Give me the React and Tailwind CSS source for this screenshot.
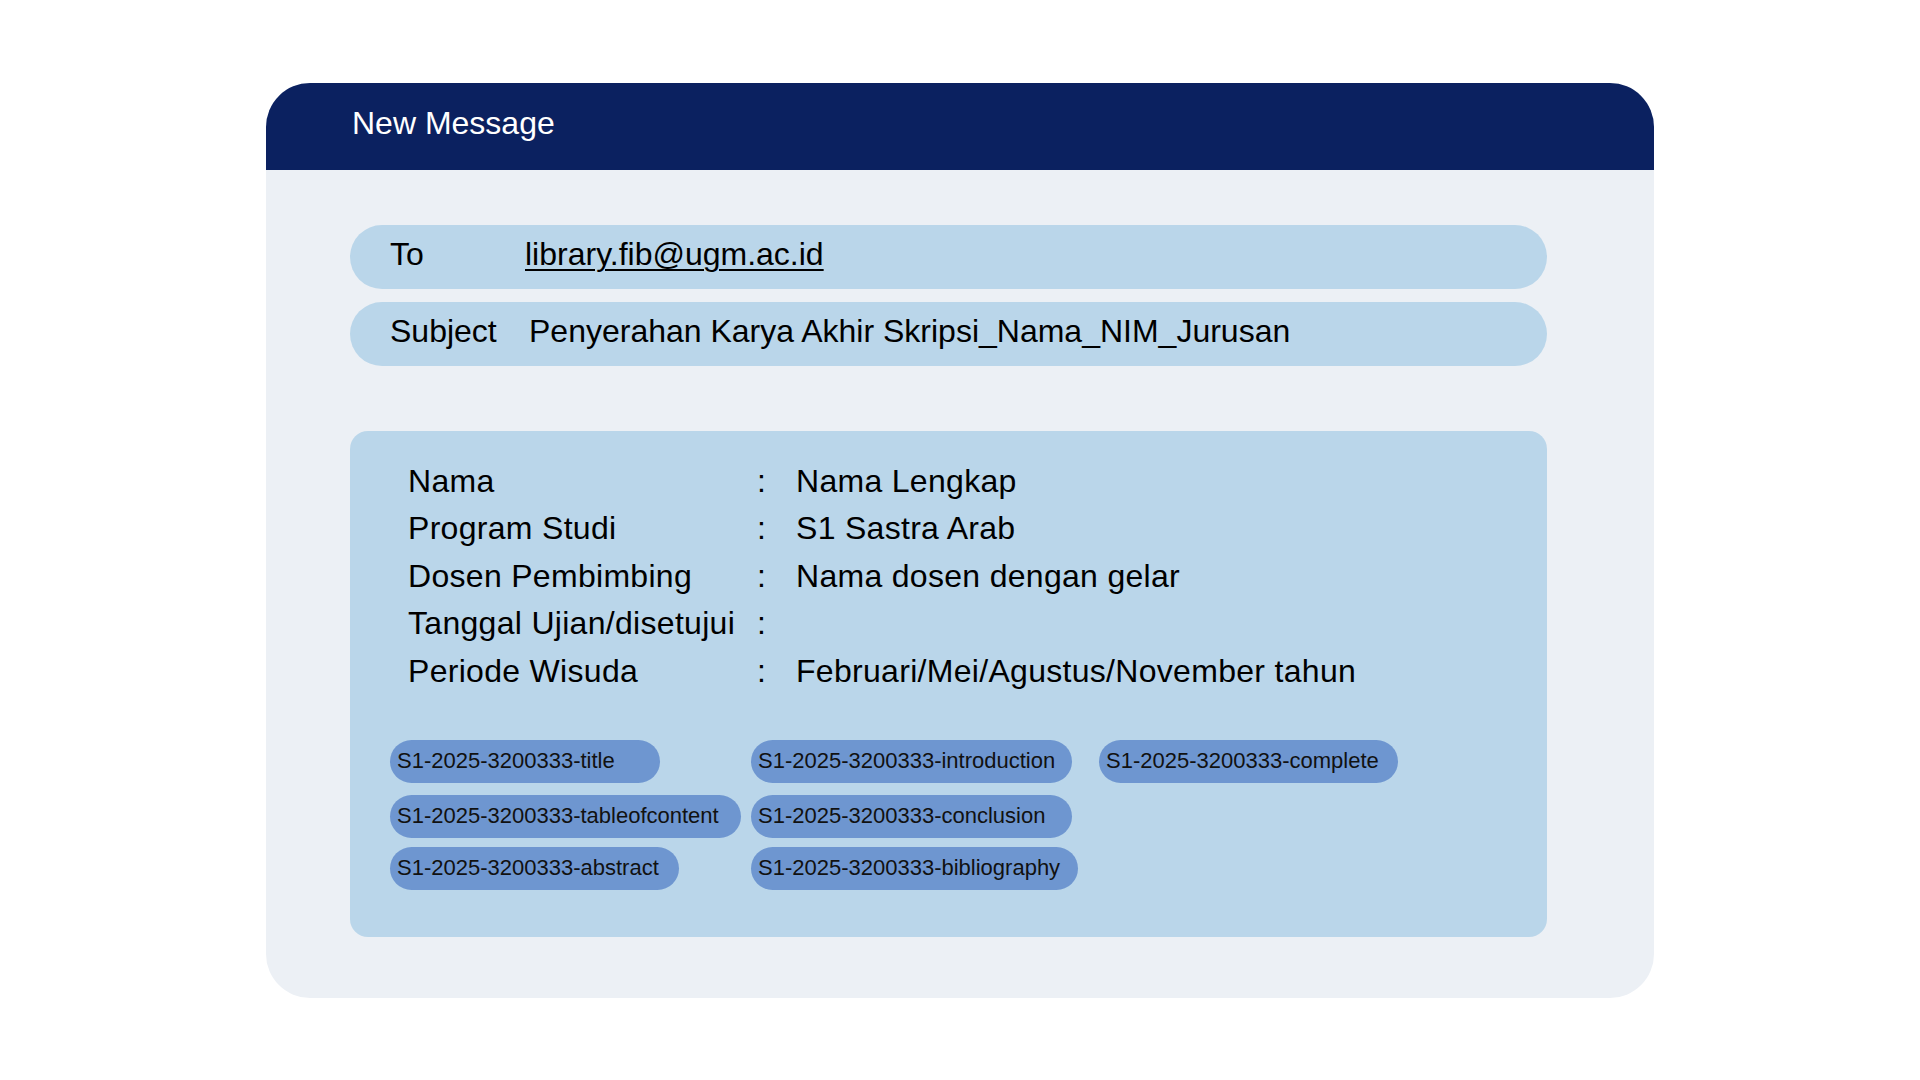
const fields = [
  ["Nama", "Nama Lengkap"],
  ["Program Studi", "S1 Sastra Arab"],
  ["Dosen Pembimbing", "Nama dosen dengan gelar"],
  ["Tanggal Ujian/disetujui", ""],
  ["Periode Wisuda", "Februari/Mei/Agustus/November tahun"],
];

const chipRows = [
  { gap: "mt-0", items: [["title", "w-[270px]"], ["introduction", "w-[321px]"], ["complete", "w-[299px]"]] },
  { gap: "mt-[12px]", items: [["tableofcontent", "w-[351px]"], ["conclusion", "w-[321px]"]] },
  { gap: "mt-[9px]", items: [["abstract", "w-[289px]"], ["bibliography", "w-[327px]"]] },
];

function Chip({ name, width }) {
  return (
    <div className={`flex h-[43px] items-center rounded-full bg-[#6e96d0] pb-[2px] pl-[7px] text-[22px] text-[#111] ${width}`}>
      S1-2025-3200333-{name}
    </div>
  );
}

export default function App() {
  return (
    <div
      className="flex h-screen w-full items-center justify-center bg-white"
      style={{ fontFamily: '"Liberation Sans", Arial, sans-serif' }}
    >
      <div className="flex h-[915px] w-[1388px] flex-col overflow-hidden rounded-[44px] bg-[#ecf0f5]">
        {/* title bar */}
        <div className="flex h-[87px] shrink-0 items-center bg-[#0b2160] pb-[6px] pl-[86px]">
          <h1 className="text-[32px] font-normal text-white">New Message</h1>
        </div>

        <div className="flex flex-col pl-[84px] pr-[107px] pt-[55px]">
          {/* To / Subject */}
          <div className="flex h-[64px] items-center rounded-full bg-[#bad6ea] pb-[5px] pl-[40px] text-[32px] text-black">
            <span className="w-[135px] shrink-0">To</span>
            <span className="underline decoration-[1.5px] underline-offset-[4px]">library.fib@ugm.ac.id</span>
          </div>
          <div className="mt-[13px] flex h-[64px] items-center rounded-full bg-[#bad6ea] pb-[5px] pl-[40px] text-[32px] text-black">
            <span className="w-[139px] shrink-0">Subject</span>
            <span>Penyerahan Karya Akhir Skripsi_Nama_NIM_Jurusan</span>
          </div>

          {/* message body */}
          <div className="mt-[65px] h-[506px] rounded-[18px] bg-[#bad6ea] pl-[58px] pt-[27px]">
            <div className="grid grid-cols-[349px_39px_1fr] text-[32px] leading-[47.5px] tracking-[0.3px] text-black">
              {fields.map(([label, value]) => (
                <div key={label} className="contents">
                  <span>{label}</span>
                  <span>:</span>
                  <span>{value}</span>
                </div>
              ))}
            </div>

            <div className="-ml-[18px] mt-[45px] flex flex-col">
              {chipRows.map((row, i) => (
                <div key={i} className={`grid grid-cols-[361px_348px_auto] ${row.gap}`}>
                  {row.items.map(([name, width]) => (
                    <Chip key={name} name={name} width={width} />
                  ))}
                </div>
              ))}
            </div>
          </div>
        </div>
      </div>
    </div>
  );
}
